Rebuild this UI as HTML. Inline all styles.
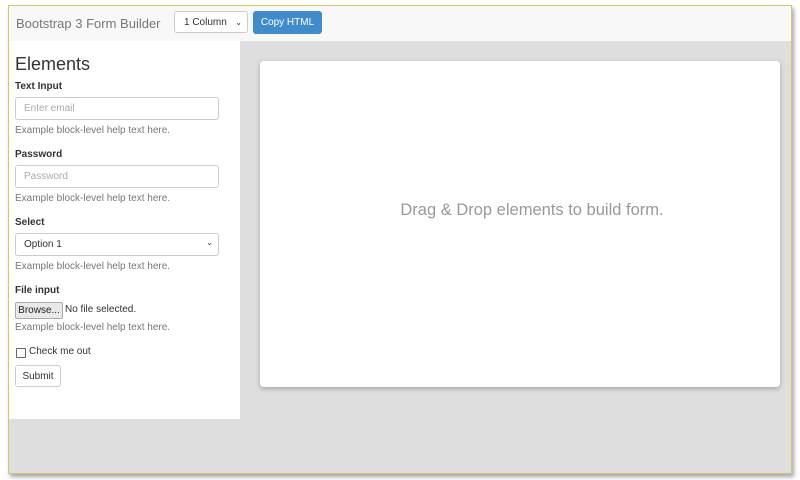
<!DOCTYPE html>
<html><head><style>
body{margin:0;width:800px;height:480px;background:#fff;font-family:"Liberation Sans",sans-serif;position:relative;overflow:hidden}
.frame{position:absolute;left:8px;top:5px;width:782px;height:467px;border:1px solid #d4c766;background:#dedede;box-shadow:2px 3px 4px rgba(0,0,0,.35);overflow:hidden}
.nav{position:absolute;left:0;top:0;right:0;height:35px;background:#f8f8f8}
.brand{position:absolute;left:7px;top:10px;font-size:13px;color:#777}
.sel{position:absolute;left:165px;top:5px;width:74px;height:22px;border:1px solid #ccc;border-radius:3px;background:#fff;font-size:10px;color:#333;line-height:22px;padding-left:9px;box-sizing:border-box}
.sel span{position:absolute;right:5px;top:0;font-size:8px}
.btn{position:absolute;left:244px;top:5px;width:69px;height:23px;background:#428bca;border-radius:3px;color:#fff;font-size:10px;line-height:23px;text-align:center}
.side{position:absolute;left:0;top:35px;width:231px;height:378px;background:#fff}
.side *{position:absolute}
h1{margin:0;font-weight:normal;font-size:18px;color:#333;left:6px;top:13px}
.l{font-weight:bold;font-size:10px;color:#333;left:6px}
.in{left:6px;width:204px;height:23px;border:1px solid #ccc;border-radius:3px;box-sizing:border-box;font-size:10px;color:#aaa;line-height:21px;padding-left:8px}
.h{font-size:10px;color:#777;left:6px}
.card{position:absolute;left:251px;top:55px;width:520px;height:326px;background:#fff;border-radius:4px;box-shadow:0 2px 5px rgba(0,0,0,.25);text-align:center;line-height:298px;font-size:16.5px;color:#999;padding-left:24px;box-sizing:border-box}
</style></head><body>
<div class="frame">
<div class="nav"><div class="brand">Bootstrap 3 Form Builder</div>
<div class="sel">1 Column<span>&#8964;</span></div><div class="btn">Copy HTML</div></div>
<div class="side">
<h1>Elements</h1>
<div class="l" style="top:40px">Text Input</div>
<div class="in" style="top:56px">Enter email</div>
<div class="h" style="top:84px">Example block-level help text here.</div>
<div class="l" style="top:108px">Password</div>
<div class="in" style="top:124px">Password</div>
<div class="h" style="top:152px">Example block-level help text here.</div>
<div class="l" style="top:176px">Select</div>
<div class="in" style="top:192px;color:#333">Option 1<span style="right:5px;top:-2px;font-size:8px">&#8964;</span></div>
<div class="h" style="top:220px">Example block-level help text here.</div>
<div class="l" style="top:244px">File input</div>
<div style="left:6px;top:261px;width:46px;height:15px;border:1px solid #aaa;border-radius:2px;background:#e9e9e9;font-size:10px;color:#222;line-height:15px;text-align:center">Browse...</div>
<div style="left:56px;top:263px;font-size:10px;color:#333">No file selected.</div>
<div class="h" style="top:281px">Example block-level help text here.</div>
<div style="left:7px;top:307px;width:8px;height:8px;border:1px solid #666;border-radius:1px"></div>
<div style="left:20px;top:305px;font-size:10px;color:#333">Check me out</div>
<div style="left:6px;top:324px;width:46px;height:22px;border:1px solid #ccc;border-radius:3px;box-sizing:border-box;font-size:10px;color:#333;line-height:22px;text-align:center">Submit</div>
</div>
<div class="card">Drag &amp; Drop elements to build form.</div>
</div>
</body></html>
